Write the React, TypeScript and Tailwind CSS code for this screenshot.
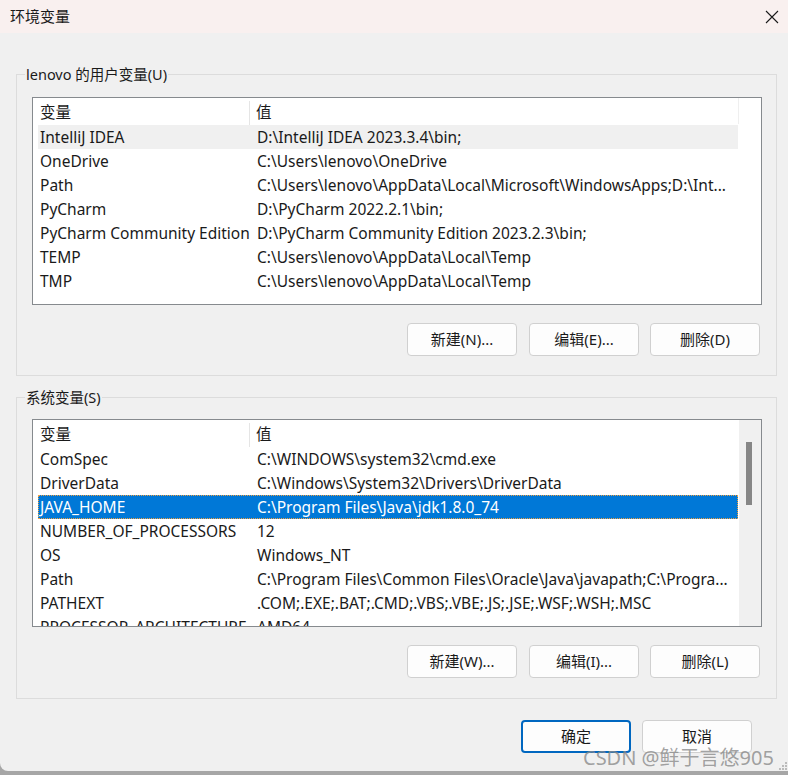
import React from 'react';

const font = { fontFamily: '"Noto Sans", "Noto Sans CJK SC", sans-serif' };

const userVars: [string, string][] = [
  ['IntelliJ IDEA', 'D:\\IntelliJ IDEA 2023.3.4\\bin;'],
  ['OneDrive', 'C:\\Users\\lenovo\\OneDrive'],
  ['Path', 'C:\\Users\\lenovo\\AppData\\Local\\Microsoft\\WindowsApps;D:\\Int...'],
  ['PyCharm', 'D:\\PyCharm 2022.2.1\\bin;'],
  ['PyCharm Community Edition', 'D:\\PyCharm Community Edition 2023.2.3\\bin;'],
  ['TEMP', 'C:\\Users\\lenovo\\AppData\\Local\\Temp'],
  ['TMP', 'C:\\Users\\lenovo\\AppData\\Local\\Temp'],
];

const sysVars: [string, string][] = [
  ['ComSpec', 'C:\\WINDOWS\\system32\\cmd.exe'],
  ['DriverData', 'C:\\Windows\\System32\\Drivers\\DriverData'],
  ['JAVA_HOME', 'C:\\Program Files\\Java\\jdk1.8.0_74'],
  ['NUMBER_OF_PROCESSORS', '12'],
  ['OS', 'Windows_NT'],
  ['Path', 'C:\\Program Files\\Common Files\\Oracle\\Java\\javapath;C:\\Progra...'],
  ['PATHEXT', '.COM;.EXE;.BAT;.CMD;.VBS;.VBE;.JS;.JSE;.WSF;.WSH;.MSC'],
  ['PROCESSOR_ARCHITECTURE', 'AMD64'],
];

function Button({ label, primary }: { label: string; primary?: boolean }) {
  return (
    <button
      className={
        'w-[110px] h-[33px] rounded-[4px] bg-[#fdfdfd] text-[15px] text-[#1a1a1a] flex items-center justify-center ' +
        (primary ? 'border-2 border-[#0067c0]' : 'border border-[#d0d0d0]')
      }
    >
      {label}
    </button>
  );
}

function VarList({ rows, hover, selected, scroll }: { rows: [string, string][]; hover?: number; selected?: number; scroll?: boolean }) {
  return (
    <div className="h-[208px] border border-[#868a8e] bg-white flex overflow-hidden">
      <div className="w-[705px] flex flex-col">
        <div className="h-[27px] pt-[2px] flex items-center text-[15.5px] text-[#1a1a1a] shrink-0">
          <div className="w-[217px] h-[24px] pl-[7px] border-r border-[#e5e5e5] flex items-center">变量</div>
          <div className="pl-[6px]">值</div>
        </div>
        <div className="pl-[5px] flex flex-col">
          {rows.map(([k, v], i) => (
            <div
              key={k + i}
              className={
                'h-[24px] pt-[2px] flex items-center text-[15.5px] whitespace-nowrap shrink-0 ' +
                (i === selected
                  ? 'bg-[#0078d7] text-white outline outline-1 outline-dotted outline-[#f0a040] -outline-offset-1'
                  : i === hover
                  ? 'bg-[#f0f0f0] text-[#1a1a1a]'
                  : 'text-[#1a1a1a]')
              }
            >
              <div className="w-[217px] pl-[2px] overflow-hidden">{k}</div>
              <div className="pl-[2px]">{v}</div>
            </div>
          ))}
        </div>
      </div>
      {scroll ? (
        <div className="flex-1 bg-[#f0f0f0] ml-[1px] pt-[22px] pl-[7px]">
          <div className="w-[6px] h-[63px] bg-[#868686]" />
        </div>
      ) : (
        <div className="flex-1 bg-white">
          <div className="w-px h-[26px] bg-[#efefef]" />
        </div>
      )}
    </div>
  );
}

function Group({ title, gap, bottom, children }: { title: string; gap: string; bottom: string; children: React.ReactNode }) {
  return (
    <div className={'mx-[16px] w-[761px] border border-[#dcdcdc] pl-[15px] pr-[14px] ' + bottom}>
      <div className={'-mt-[11px] -ml-[7px] px-[1px] w-fit h-[20px] leading-[20px] bg-[#f0f0f0] text-[14.5px] text-[#1a1a1a] whitespace-nowrap ' + gap}>
        {title}
      </div>
      {children}
    </div>
  );
}

export default function App() {
  return (
    <div className="w-[788px] h-[775px] relative overflow-hidden bg-[#a6a6a6]" style={font}>
      <div className="h-[771px] bg-[#f0f0f0] rounded-bl-[8px] flex flex-col">
        <div className="h-[33px] bg-[#f9f0ef] flex items-center justify-between pl-[10px] pr-[10px] shrink-0">
          <span className="text-[15px] text-[#1a1a1a]">环境变量</span>
          <svg width="14" height="14" viewBox="0 0 14 14" className="mr-[-1px]">
            <path d="M1 1 L13 13 M13 1 L1 13" stroke="#1a1a1a" strokeWidth="1.1" />
          </svg>
        </div>

        <div className="mt-[41px]">
          <Group title="lenovo 的用户变量(U)" gap="mb-[13px]" bottom="pb-[19px]">
            <VarList rows={userVars} hover={0} />
            <div className="mt-[18px] flex justify-end pr-[2px]">
              <Button label="新建(N)..." />
              <div className="ml-[12px]"><Button label="编辑(E)..." /></div>
              <div className="ml-[11px]"><Button label="删除(D)" /></div>
            </div>
          </Group>
        </div>

        <div className="mt-[21px]">
          <Group title="系统变量(S)" gap="mb-[12px]" bottom="pb-[20px]">
            <VarList rows={sysVars} selected={2} scroll />
            <div className="mt-[18px] flex justify-end pr-[2px]">
              <Button label="新建(W)..." />
              <div className="ml-[12px]"><Button label="编辑(I)..." /></div>
              <div className="ml-[11px]"><Button label="删除(L)" /></div>
            </div>
          </Group>
        </div>

        <div className="mt-[21px] flex justify-end gap-[11px] pr-[36px]">
          <Button label="确定" primary />
          <Button label="取消" />
        </div>
      </div>

      <div className="absolute left-[583px] top-[743px] text-[20px] text-[#8a8a8a]/80 whitespace-nowrap">
        CSDN @鲜于言悠905
      </div>
      <div className="absolute right-[1px] bottom-[5px] grid grid-cols-3 gap-[1px]">
        <span className="w-[2px] h-[2px]" />
        <span className="w-[2px] h-[2px]" />
        <span className="w-[2px] h-[2px] bg-[#bbb]" />
        <span className="w-[2px] h-[2px]" />
        <span className="w-[2px] h-[2px] bg-[#bbb]" />
        <span className="w-[2px] h-[2px] bg-[#bbb]" />
        <span className="w-[2px] h-[2px] bg-[#bbb]" />
        <span className="w-[2px] h-[2px] bg-[#bbb]" />
        <span className="w-[2px] h-[2px] bg-[#bbb]" />
      </div>
    </div>
  );
}
